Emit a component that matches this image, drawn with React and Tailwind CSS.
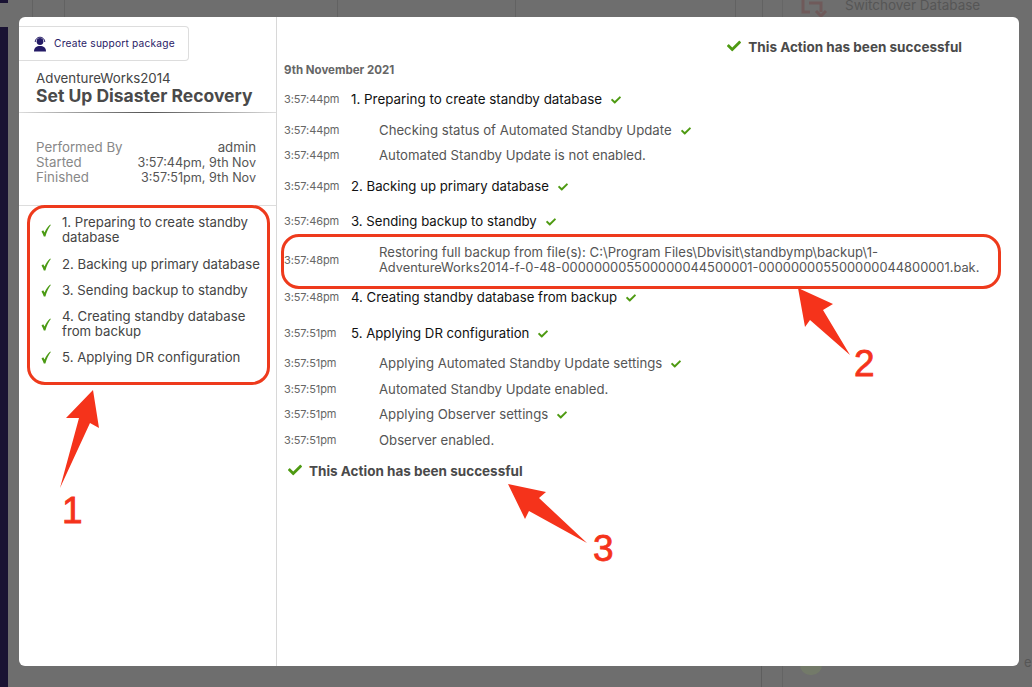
import { FaCheck } from 'react-icons/fa'

const FONT = "font-['Inter','Liberation_Sans',sans-serif]"

const STEPS = [
  ['1. Preparing to create standby', 'database'],
  ['2. Backing up primary database'],
  ['3. Sending backup to standby'],
  ['4. Creating standby database', 'from backup'],
  ['5. Applying DR configuration'],
]

function TallCheck() {
  return (
    <svg width="10" height="13" viewBox="0 0 10 13" className="shrink-0">
      <path d="M0.5 7.5 L2.2 6.2 L3.6 8.6 C4.8 5.4 6.6 2.6 9.2 0.5 L9.8 1 C7.4 4 5.6 8 4.4 12.6 L2.8 12.6 C2.3 10.8 1.5 9 0.5 7.5 Z" fill="#4b9a14" />
    </svg>
  )
}

function Check() {
  return <FaCheck className="inline-block ml-[9px] text-[#4e9a12] text-[10px] align-[-1px]" />
}

function Row({ time, sub, check, className, children }) {
  return (
    <div className={`flex items-center ${className}`}>
      <div className="w-[67px] shrink-0 text-[11px] leading-[15px] tracking-[-0.1px] text-[#666]">{time}</div>
      <div className={sub ? 'whitespace-nowrap pl-[28px] text-[13.2px] leading-[15px] text-[#555]' : 'whitespace-nowrap text-[13.2px] leading-[15px] text-[#111]'}>
        {children}
        {check && <Check />}
      </div>
    </div>
  )
}

function Success({ className }) {
  return (
    <div className={`flex items-center ${className}`}>
      <FaCheck className="text-[#4e9a12] text-[14px] mr-[7px] -mt-[4px]" />
      <span className="text-[13.5px] font-bold leading-[15px] text-[#4a4a4a]">This Action has been successful</span>
    </div>
  )
}

export default function App() {
  return (
    <div className={`relative w-[1032px] h-[687px] overflow-hidden bg-[#6e6e6e] pl-[19px] pt-[17px] ${FONT}`}>
      {/* dimmed page behind the modal */}
      <div className="absolute left-0 top-[27px] bottom-0 w-[8px] bg-[#1a1333]" />
      <div className="absolute left-0 top-0 h-[3px] w-[8px] bg-[#1a1333]" />
      <div className="absolute left-[32px] top-0 h-[17px] w-px bg-[#626262]" />
      <div className="absolute left-[64px] top-0 h-[17px] w-px bg-[#626262]" />
      <div className="absolute left-[337px] top-0 h-[17px] w-px bg-[#626262]" />
      <div className="absolute left-[515px] top-0 h-[17px] w-px bg-[#626262]" />
      <div className="absolute left-[735px] top-0 h-[17px] w-px bg-[#626262]" />
      <div className="absolute left-[762px] top-0 h-[17px] w-px bg-[#626262]" />
      <div className="absolute left-[782px] top-0 h-[17px] w-px bg-[#666666]" />
      <div className="absolute left-[761px] top-[666px] h-[21px] w-px bg-[#5e5e5e]" />
      <div className="absolute left-[782px] top-[666px] h-[21px] w-px bg-[#646464]" />
      <div className="absolute left-[845px] top-0 text-[13.5px] leading-[11px] text-[#565656]">Switchover Database</div>
      <svg className="absolute left-[797px] top-0" width="30" height="18" viewBox="0 0 30 18" fill="none">
        <path d="M6 0 L6 12 L13 12 M12 3 L24 3 L24 12" stroke="#6f5a5a" strokeWidth="3" />
        <path d="M19 11 L24 16 L29 11" stroke="#6f5a5a" strokeWidth="3" />
      </svg>
      <div className="absolute left-[800px] top-[655px] h-[20px] w-[22px] rounded-full bg-[#737a69]" />
      <div className="absolute left-[1024px] top-[653px] text-[13px] text-[#565656]">e</div>

      {/* modal */}
      <div className="relative flex h-[649px] w-[1000px] rounded-[6px] bg-white">
        <div className="w-[258px] shrink-0 border-r border-[#d8d8d8] pt-[9px]">
          <div className="flex h-[35px] w-[170px] items-center rounded-r-[4px] border border-l-0 border-[#ddd] pl-[14px]">
            <svg width="14" height="16" viewBox="0 0 14 16" className="mr-[7px]">
              <circle cx="7" cy="5.5" r="3.4" fill="#241b66" />
              <path d="M2.2 6 A4.8 4.8 0 0 1 11.8 6" fill="none" stroke="#241b66" strokeWidth="1" />
              <path d="M1 15.5 C1 11.5 3.5 10 7 10 C10.5 10 13 11.5 13 15.5 Z" fill="#241b66" />
            </svg>
            <span className="text-[10.2px] leading-none tracking-[0.2px] text-[#2a2166]">Create support package</span>
          </div>
          <div className="pl-[17px] pt-[10px] text-[13.3px] leading-[15px] text-[#444]">AdventureWorks2014</div>
          <div className="pl-[17px] text-[17.5px] font-bold leading-[19px] text-[#4a4a4a]">Set Up Disaster Recovery</div>
          <div className="mt-[7px] h-px bg-gradient-to-r from-[#ddd] via-[#555] to-[#ddd]" />
          <div className="flex flex-col pl-[17px] pt-[27px] pb-[20px] pr-[20px] text-[13.3px] leading-[15px]">
            <div className="flex justify-between"><span className="text-[#888]">Performed By</span><span className="text-[#555]">admin</span></div>
            <div className="flex justify-between"><span className="text-[#888]">Started</span><span className="text-[12.6px] text-[#555]">3:57:44pm, 9th Nov</span></div>
            <div className="flex justify-between"><span className="text-[#888]">Finished</span><span className="text-[12.6px] text-[#555]">3:57:51pm, 9th Nov</span></div>
          </div>
          <div className="border-t border-[#ddd] pl-[22px] pt-[9px]">
            {STEPS.map((s) => (
              <div key={s[0]} className="mb-[11px] flex items-center first:mb-[12px]">
                <TallCheck />
                <div className="pl-[11px] text-[13.2px] leading-[15px] text-[#444]">
                  {s.map((l) => <div key={l}>{l}</div>)}
                </div>
              </div>
            ))}
          </div>
        </div>

        <div className="flex-1 pl-[7px] pt-[23px]">
          <Success className="justify-end pr-[57px]" />
          <div className="mt-[8px] text-[11.5px] font-bold leading-[15px] text-[#666]">9th November 2021</div>
          <Row time="3:57:44pm" check className="mt-[14px]"><span className="text-[13.4px]">1. Preparing to create standby database</span></Row>
          <Row time="3:57:44pm" sub check className="mt-[16px]">Checking status of Automated Standby Update</Row>
          <Row time="3:57:44pm" sub className="mt-[10px]">Automated Standby Update is not enabled.</Row>
          <Row time="3:57:44pm" check className="mt-[16px]">2. Backing up primary database</Row>
          <Row time="3:57:46pm" check className="mt-[20px]">3. Sending backup to standby</Row>
          <Row time="3:57:48pm" sub className="mt-[16px]">
            <span className="text-[13.13px]">Restoring full backup from file(s): C:\Program Files\Dbvisit\standbymp\backup\1-</span>
            <br />
            <span className="text-[12.85px]">AdventureWorks2014-f-0-48-000000005500000044500001-000000005500000044800001.bak.</span>
          </Row>
          <Row time="3:57:48pm" check className="mt-[15px]">4. Creating standby database from backup</Row>
          <Row time="3:57:51pm" check className="mt-[21px]">5. Applying DR configuration</Row>
          <Row time="3:57:51pm" sub check className="mt-[15px]">Applying Automated Standby Update settings</Row>
          <Row time="3:57:51pm" sub className="mt-[11px]">Automated Standby Update enabled.</Row>
          <Row time="3:57:51pm" sub check className="mt-[10px]">Applying Observer settings</Row>
          <Row time="3:57:51pm" sub className="mt-[11px]">Observer enabled.</Row>
          <Success className="mt-[16px] pl-[4px]" />
        </div>
      </div>

      {/* red annotations on top of the screenshot */}
      <div className="absolute left-[27px] top-[205px] h-[180px] w-[243px] rounded-[18px] border-[3px] border-[#ee3a1c]" />
      <div className="absolute left-[281px] top-[234px] h-[55px] w-[720px] rounded-[18px] border-[3px] border-[#ee3a1c]" />
      <svg className="absolute left-0 top-0" width="1032" height="687">
        <polygon points="93,390 66,418 79,418 60,488 90,423 99,428" fill="#f5331b" />
        <polygon points="798,288 833,304 823,310 850,355 810,320 805,327" fill="#f5331b" />
        <polygon points="508,484 546,492 539,498 587,543 529,511 525,519" fill="#f5331b" />
      </svg>
      <div className="absolute left-[62px] top-[490px] font-['Liberation_Sans',sans-serif] text-[37px] leading-[42px] text-[#f5331b] [-webkit-text-stroke:0.8px_#f5331b]">1</div>
      <div className="absolute left-[854px] top-[343px] font-['Liberation_Sans',sans-serif] text-[37px] leading-[42px] text-[#f5331b] [-webkit-text-stroke:0.8px_#f5331b]">2</div>
      <div className="absolute left-[593px] top-[528px] font-['Liberation_Sans',sans-serif] text-[37px] leading-[42px] text-[#f5331b] [-webkit-text-stroke:0.8px_#f5331b]">3</div>
    </div>
  )
}
